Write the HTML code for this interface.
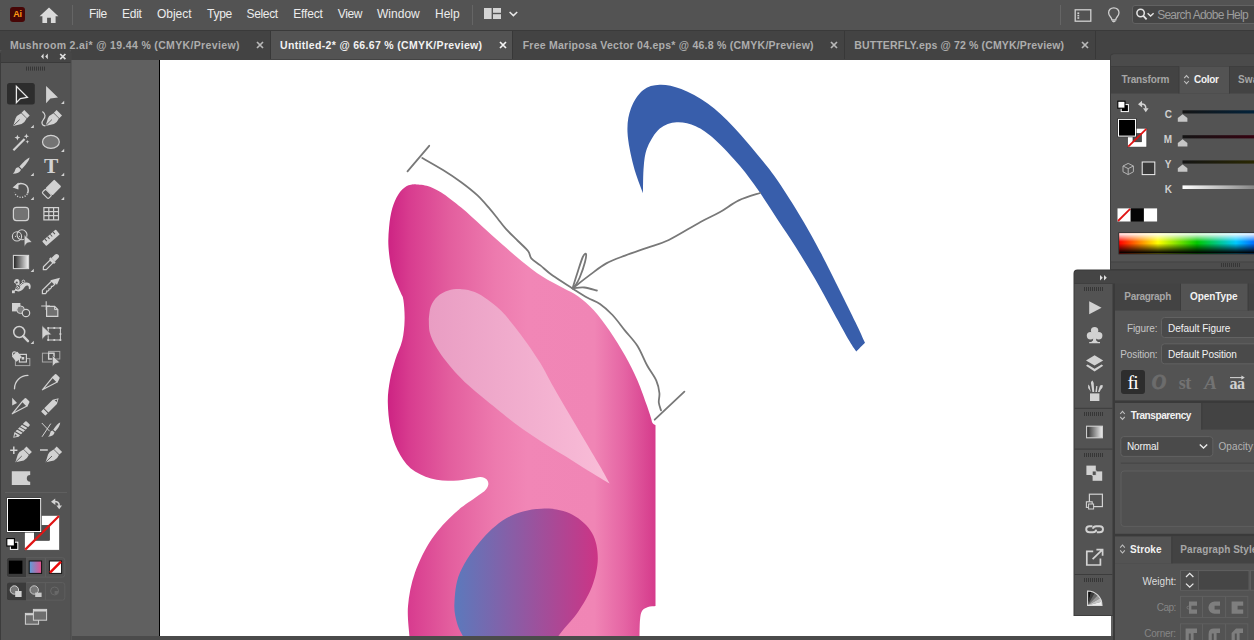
<!DOCTYPE html>
<html><head><meta charset="utf-8"><title>Adobe Illustrator</title>
<style>
*{box-sizing:border-box;margin:0;padding:0}
html,body{width:1254px;height:640px;overflow:hidden;background:#606060;font-family:"Liberation Sans",sans-serif;font-size:12px;color:#e0e0e0}
.abs{position:absolute}
#menubar{left:0;top:0;width:1254px;height:30px;background:#535353}
#menubar .mi{position:absolute;top:6px;font-size:12px;color:#ececec;white-space:nowrap;line-height:16px}
#tabbar{left:0;top:30px;width:1254px;height:29.5px;background:#434343;border-top:1px solid #3a3a3a}
.tab{position:absolute;top:0;height:28px;font-size:10.5px;font-weight:bold;line-height:28px;color:#adadad;white-space:nowrap;border-right:1px solid #383838}
.tab.on{background:#535353;color:#f2f2f2}
#paste{left:0;top:59px;width:1254px;height:581px;background:#606060}
#art{left:159px;top:59px;width:952px;height:577px;background:#fff;overflow:hidden;border-left:1px solid #000}
#botbar{left:72px;top:635.6px;width:1042px;height:5px;background:#4b4b4b}
#tools{left:0;top:50px;width:72px;height:590px}
#right{left:1070px;top:50px;width:184px;height:590px}
</style></head><body>
<div id="paste" class="abs"></div>
<div id="art" class="abs">
<svg width="951" height="577" viewBox="160 59 951 577" style="position:absolute;left:0;top:0">
<defs>
<linearGradient id="gp" gradientUnits="userSpaceOnUse" x1="388" y1="0" x2="656" y2="0">
<stop offset="0" stop-color="#cd2383"/><stop offset="0.08" stop-color="#d83c8f"/><stop offset="0.23" stop-color="#e35e9e"/><stop offset="0.4" stop-color="#ed7aae"/><stop offset="0.52" stop-color="#f186b6"/><stop offset="0.77" stop-color="#f085b5"/><stop offset="0.88" stop-color="#e565a4"/><stop offset="1" stop-color="#d53a8b"/>
</linearGradient>
<linearGradient id="gt" gradientUnits="userSpaceOnUse" x1="429" y1="0" x2="610" y2="0">
<stop offset="0" stop-color="#e99dc3"/><stop offset="1" stop-color="#f9bdd8"/>
</linearGradient>
<linearGradient id="ge" gradientUnits="userSpaceOnUse" x1="455" y1="0" x2="598" y2="0">
<stop offset="0" stop-color="#5c79bc"/><stop offset="1" stop-color="#cc3485"/>
</linearGradient>
</defs>
<path fill="url(#gp)" d="M414.5,184.2 C416.5,184.5 422.3,184.5 426.7,185.8 C431.1,187.2 435.1,188.7 440.9,192.3 C446.6,195.9 454.4,202.0 461.2,207.6 C468.0,213.2 474.7,219.7 481.5,225.8 C488.3,231.9 495.0,238.2 501.8,244.1 C508.6,250.0 515.3,256.0 522.1,261.4 C528.9,266.8 535.6,272.2 542.4,276.6 C549.2,281.0 556.8,284.5 562.7,287.8 C568.6,291.1 572.8,292.6 578.0,296.3 C583.2,300.1 588.6,304.6 593.8,310.3 C599.0,316.0 604.2,323.1 609.4,330.6 C614.6,338.2 620.3,347.3 625.0,355.6 C629.7,363.9 633.9,372.3 637.5,380.6 C641.1,388.9 644.6,399.4 646.9,405.6 C649.1,411.8 650.1,415.1 651.0,418.0 C651.9,420.9 651.8,421.8 652.5,423.0 C653.2,424.2 655.0,424.8 655.5,425.2 C655.5,455.3 655.5,575.9 655.5,606.0 C654.2,606.2 650.2,606.2 648.0,607.0 C645.8,607.8 643.3,608.8 642.0,611.0 C640.7,613.2 640.4,615.8 640.0,620.0 C639.6,624.2 639.6,633.3 639.5,636.0 C601.1,636.0 447.8,636.0 409.4,636.0 C409.2,631.0 407.1,616.8 408.0,606.2 C408.9,595.6 411.0,583.8 415.0,572.5 C419.0,561.2 425.3,548.6 431.9,538.7 C438.5,528.9 446.9,520.4 454.4,513.4 C461.9,506.4 471.8,500.4 476.9,496.6 C482.0,492.8 483.1,492.5 485.0,490.5 C486.9,488.5 488.1,486.4 488.3,484.5 C488.6,482.6 487.8,480.6 486.5,479.3 C485.2,478.1 483.2,477.1 480.5,477.0 C477.8,476.9 474.6,478.2 470.0,478.8 C465.4,479.4 459.5,480.9 453.0,480.8 C446.5,480.7 438.1,480.5 431.0,478.4 C423.9,476.3 416.1,472.9 410.5,468.2 C404.9,463.5 400.9,456.7 397.5,450.0 C394.1,443.3 392.0,436.0 390.4,428.0 C388.8,420.0 387.9,410.0 387.8,402.0 C387.7,394.0 388.8,387.0 390.0,380.0 C391.2,373.0 393.2,366.6 395.2,360.0 C397.2,353.4 400.6,347.3 402.2,340.6 C403.8,333.9 404.4,326.8 404.6,320.0 C404.8,313.2 404.1,304.7 403.4,300.0 C402.7,295.3 402.2,296.6 400.3,291.8 C398.4,287.1 394.2,278.9 392.2,271.5 C390.2,264.1 389.0,254.6 388.5,247.2 C388.0,239.8 388.5,233.3 389.1,226.9 C389.7,220.5 390.7,214.0 392.2,208.6 C393.7,203.2 395.9,198.1 398.3,194.4 C400.7,190.7 403.7,187.9 406.4,186.2 C409.1,184.5 413.1,184.5 414.5,184.2 Z"/>
<path fill="url(#gt)" d="M428.8,319.4 C429.1,317.2 429.4,310.1 430.9,306.3 C432.3,302.5 434.6,299.0 437.5,296.4 C440.4,293.8 444.4,291.7 448.4,290.5 C452.4,289.3 457.2,288.9 461.6,289.2 C466.0,289.4 470.3,290.2 474.7,292.0 C479.1,293.8 483.4,296.6 487.8,299.7 C492.2,302.8 496.5,306.2 500.9,310.6 C505.3,315.0 509.7,320.4 514.1,325.9 C518.5,331.4 522.8,337.2 527.2,343.4 C531.6,349.6 536.6,357.0 540.3,363.1 C544.0,369.2 546.8,374.9 549.6,380.0 C552.4,385.1 554.6,389.0 557.3,393.7 C560.0,398.4 563.0,403.5 565.9,408.4 C568.8,413.3 571.6,418.1 574.5,423.0 C577.4,427.9 580.1,432.7 583.0,437.6 C585.9,442.5 588.8,447.3 591.7,452.2 C594.6,457.1 597.3,461.6 600.3,466.8 C603.3,472.0 608.1,480.8 609.7,483.6 C608.1,482.7 604.8,480.7 600.3,478.0 C595.8,475.3 588.7,471.2 583.0,467.6 C577.3,464.0 571.6,460.1 565.9,456.5 C560.2,452.9 554.4,449.8 548.7,446.2 C543.0,442.6 537.2,438.9 531.5,435.0 C525.8,431.1 520.1,427.3 514.4,423.0 C508.7,418.7 502.5,413.5 497.2,409.2 C491.9,404.9 487.4,401.2 482.5,397.2 C477.6,393.2 472.7,389.2 468.1,385.0 C463.5,380.8 459.0,376.3 455.0,371.9 C451.0,367.5 447.4,363.2 444.1,358.8 C440.8,354.4 437.7,350.0 435.3,345.6 C432.9,341.2 430.9,336.9 429.8,332.5 C428.7,328.1 429.0,321.6 428.8,319.4 Z"/>
<path fill="url(#ge)" d="M462.8,636.0 C461.8,633.8 458.4,628.4 457.0,623.0 C455.6,617.6 453.9,611.8 454.4,603.4 C454.9,595.0 455.3,583.3 460.0,572.5 C464.7,561.7 474.1,548.1 482.5,538.7 C490.9,529.3 500.3,521.0 510.6,516.0 C520.9,511.0 534.1,508.8 544.4,508.6 C554.7,508.4 564.6,510.7 572.5,514.8 C580.4,518.9 587.8,525.7 592.0,533.0 C596.2,540.3 597.8,549.5 597.8,558.4 C597.8,567.3 595.3,577.6 592.0,586.5 C588.7,595.4 582.7,604.9 578.0,611.9 C573.3,618.9 567.3,624.7 564.0,628.7 C560.7,632.7 559.3,634.8 558.4,636.0 Z"/>
<path fill="#385eab" d="M643.0,193.3 C641.4,188.7 636.1,175.9 633.5,165.7 C630.9,155.5 627.9,141.8 627.5,132.2 C627.1,122.6 628.4,115.3 631.0,108.3 C633.6,101.3 638.2,94.2 643.0,90.3 C647.8,86.4 653.4,85.0 659.8,84.8 C666.2,84.6 673.3,86.0 681.3,89.1 C689.3,92.2 698.9,97.1 707.7,103.5 C716.5,109.9 725.0,118.0 734.0,127.4 C743.0,136.8 754.1,150.4 761.9,160.0 C769.7,169.6 773.6,174.6 780.6,185.0 C787.6,195.4 797.2,211.0 804.0,222.5 C810.8,234.0 815.3,242.4 821.3,253.8 C827.3,265.2 834.3,279.6 840.0,291.0 C845.7,302.4 851.4,313.9 855.6,322.5 C859.8,331.1 863.4,339.4 865.0,342.8 C863.5,344.2 857.8,350.1 856.3,351.5 C855.1,349.8 853.1,347.4 849.4,341.0 C845.6,334.6 839.5,323.4 833.8,313.0 C828.1,302.6 821.3,289.7 815.0,278.8 C808.7,267.9 802.2,257.4 796.0,247.5 C789.8,237.6 783.7,228.8 777.5,219.4 C771.3,210.0 765.0,199.9 758.8,191.0 C752.5,182.1 747.3,174.6 740.0,166.0 C732.7,157.4 722.2,146.0 714.8,139.4 C707.4,132.8 702.1,129.1 695.7,126.2 C689.3,123.3 682.6,121.8 676.6,122.2 C670.6,122.6 664.6,124.5 659.8,128.6 C655.0,132.7 650.5,140.4 647.8,146.6 C645.1,152.8 644.6,157.9 643.8,165.7 C643.0,173.5 643.1,188.7 643.0,193.3 Z"/>
<g fill="none" stroke="#787878" stroke-width="1.8" stroke-linecap="round" stroke-linejoin="round">
<path d="M407.5,171.3 L429.2,145.8"/>
<path d="M654.7,419.7 L684.4,391.6"/>
<path d="M422.3,158.0 C425.8,160.0 436.5,166.0 443.0,170.0 C449.5,174.0 455.4,178.0 461.2,182.2 C466.9,186.4 472.8,191.0 477.5,195.4 C482.2,199.8 486.2,204.7 489.6,208.6 C493.0,212.5 495.1,215.3 497.8,218.7 C500.5,222.1 502.5,225.2 505.9,228.9 C509.3,232.6 514.3,237.3 518.0,241.0 C521.7,244.7 526.0,248.3 528.2,251.2 C530.4,254.1 529.3,255.9 531.3,258.3 C533.3,260.7 536.8,262.5 540.4,265.4 C544.0,268.3 547.2,271.8 552.6,275.6 C558.0,279.4 566.7,284.7 572.5,288.4 C578.3,292.1 582.9,295.2 587.5,297.8 C592.1,300.4 595.8,301.1 600.0,304.0 C604.2,306.9 608.3,310.6 612.5,315.0 C616.7,319.4 620.8,325.4 625.0,330.6 C629.2,335.8 633.9,340.3 637.5,346.0 C641.1,351.7 643.8,359.2 646.9,365.0 C650.0,370.8 654.2,375.9 656.3,380.6 C658.4,385.3 659.0,389.4 659.4,393.0 C659.8,396.6 658.5,399.6 658.8,402.5 C659.1,405.4 660.6,409.0 661.0,410.3"/>
<path d="M760.0,193.0 C756.5,194.2 745.5,197.2 738.8,200.4 C732.1,203.6 726.0,208.7 719.6,212.3 C713.2,215.9 709.0,217.4 700.5,222.0 C692.0,226.6 677.7,235.7 668.8,240.0 C659.9,244.3 654.2,245.2 646.9,247.8 C639.6,250.4 631.8,253.0 625.0,255.6 C618.2,258.2 612.0,260.3 606.3,263.4 C600.6,266.5 596.2,270.2 590.6,274.4 C585.0,278.6 575.5,286.1 572.5,288.4"/>
<path d="M572.5,288.4 C573.4,285.5 576.3,276.2 578.0,271.0 C579.7,265.8 581.5,259.8 582.8,257.0 C584.1,254.2 585.6,253.2 586.0,254.0 C586.4,254.8 586.0,258.1 585.0,262.0 C584.0,265.9 581.5,273.3 579.7,277.5 C578.0,281.7 575.4,285.4 574.5,287.0"/>
<path d="M572.5,288.4 C574.5,288.2 580.3,287.1 584.4,287.5 C588.5,287.9 594.8,290.0 596.9,290.5"/>
</g>
</svg>
</div>
<div id="botbar" class="abs"></div>
<div id="menubar" class="abs">
<div class="abs" style="left:10px;top:7px;width:15px;height:15px;background:#470606;border-radius:3px;color:#ff9b12;font-weight:bold;font-size:9px;line-height:15px;text-align:center;letter-spacing:-0.3px">Ai</div>
<svg class="abs" style="left:39px;top:7px" width="20" height="17" viewBox="0 0 20 17"><path fill="#dadada" d="M10,0.6 L19.4,9.3 L16.6,9.3 L16.6,16 L11.9,16 L11.9,10.8 L8.1,10.8 L8.1,16 L3.4,16 L3.4,9.3 L0.6,9.3 Z"/></svg>
<div class="abs" style="left:72px;top:5px;width:1px;height:20px;background:#656565"></div>
<div class="mi" style="left:89.1px;letter-spacing:-0.41px">File</div>
<div class="mi" style="left:122.0px;letter-spacing:-0.24px">Edit</div>
<div class="mi" style="left:156.9px;letter-spacing:-0.01px">Object</div>
<div class="mi" style="left:207.1px;letter-spacing:-0.28px">Type</div>
<div class="mi" style="left:246.5px;letter-spacing:-0.33px">Select</div>
<div class="mi" style="left:293.2px;letter-spacing:-0.16px">Effect</div>
<div class="mi" style="left:337.8px;letter-spacing:-0.40px">View</div>
<div class="mi" style="left:376.9px;letter-spacing:0.04px">Window</div>
<div class="mi" style="left:435.1px;letter-spacing:-0.07px">Help</div>
<div class="abs" style="left:472px;top:5px;width:1px;height:20px;background:#656565"></div>
<svg class="abs" style="left:483px;top:7px" width="36" height="14" viewBox="0 0 36 14"><g fill="#d4d4d4"><rect x="1" y="1" width="7.6" height="11"/><rect x="10" y="1" width="8" height="4.8"/><rect x="10" y="7.2" width="8" height="4.8"/></g><path d="M26.6,5 L30.4,8.6 L34.2,5" fill="none" stroke="#e8e8e8" stroke-width="1.5"/></svg>
<div class="abs" style="left:1060px;top:5px;width:1px;height:20px;background:#656565"></div>
<svg class="abs" style="left:1074px;top:8px" width="18" height="15" viewBox="0 0 18 15"><rect x="1.2" y="1.8" width="15.6" height="11.4" fill="none" stroke="#d0d0d0" stroke-width="1.3"/><g fill="#d0d0d0"><rect x="3.4" y="4.4" width="1.8" height="1.6"/><rect x="3.4" y="6.8" width="1.8" height="1.6"/><rect x="3.4" y="9.2" width="1.8" height="1.6"/></g></svg>
<svg class="abs" style="left:1106px;top:6px" width="16" height="18" viewBox="0 0 16 18"><path d="M7.8,1.8 C4.6,1.8 2.6,4 2.6,6.8 C2.6,9 4,10.4 5,11.6 C5.6,12.4 5.8,13 5.8,13.8 L9.8,13.8 C9.8,13 10,12.4 10.6,11.6 C11.6,10.4 13,9 13,6.8 C13,4 11,1.8 7.8,1.8 Z" fill="none" stroke="#d0d0d0" stroke-width="1.3"/><path d="M6,14.6 H9.6 V15.6 Q7.8,17.2 6,15.6 Z" fill="#d0d0d0"/></svg>
<div class="abs" style="left:1132px;top:5px;width:130px;height:19px;background:#454545;border:1px solid #626262;border-radius:3px"></div>
<svg class="abs" style="left:1135px;top:7px" width="22" height="15" viewBox="0 0 22 15"><circle cx="5.6" cy="6" r="3.7" fill="none" stroke="#e4e4e4" stroke-width="1.5"/><path d="M8.3,8.8 L11.6,12.4" stroke="#e4e4e4" stroke-width="1.8"/><path d="M12.6,6.2 L15.6,9 L18.6,6.2" fill="none" stroke="#e4e4e4" stroke-width="1.4"/></svg>
<div class="mi" style="left:1157.2px;top:7px;color:#9c9c9c;letter-spacing:-0.75px">Search Adobe Help</div>
</div>
<div id="tabbar" class="abs">
<div class="tab" style="left:0.0px;width:271.0px"><span class="abs" style="left:9.9px;top:0;letter-spacing:0.35px">Mushroom 2.ai* @ 19.44 % (CMYK/Preview)</span><svg class="abs" style="left:256.0px;top:10px" width="8" height="8" viewBox="0 0 8 8"><path d="M1,1 L7,7 M7,1 L1,7" stroke="#b8b8b8" stroke-width="1.7"/></svg></div>
<div class="tab on" style="left:271.0px;width:242.0px"><span class="abs" style="left:9.0px;top:0;letter-spacing:0.33px">Untitled-2* @ 66.67 % (CMYK/Preview)</span><svg class="abs" style="left:228.2px;top:10px" width="8" height="8" viewBox="0 0 8 8"><path d="M1,1 L7,7 M7,1 L1,7" stroke="#f4f4f4" stroke-width="1.7"/></svg></div>
<div class="tab" style="left:513.0px;width:331.5px"><span class="abs" style="left:9.7px;top:0;letter-spacing:0.25px">Free Mariposa Vector 04.eps* @ 46.8 % (CMYK/Preview)</span><svg class="abs" style="left:316.5px;top:10px" width="8" height="8" viewBox="0 0 8 8"><path d="M1,1 L7,7 M7,1 L1,7" stroke="#b8b8b8" stroke-width="1.7"/></svg></div>
<div class="tab" style="left:844.5px;width:251.5px"><span class="abs" style="left:9.7px;top:0;letter-spacing:0.15px">BUTTERFLY.eps @ 72 % (CMYK/Preview)</span><svg class="abs" style="left:236.0px;top:10px" width="8" height="8" viewBox="0 0 8 8"><path d="M1,1 L7,7 M7,1 L1,7" stroke="#b8b8b8" stroke-width="1.7"/></svg></div>
</div>
<div id="tools" class="abs">
<svg width="72" height="590" viewBox="0 50 72 590" style="position:absolute;left:0;top:0">
<rect x="0" y="50" width="71" height="590" fill="#535353"/>
<path d="M0,62.5 V53 Q0,50 3,50 H68 Q71,50 71,53 V62.5 Z" fill="#454545"/>
<rect x="0" y="62" width="71" height="1" fill="#3a3a3a"/>
<rect x="0" y="53" width="1" height="587" fill="#3c3c3c"/><rect x="70.5" y="53" width="1" height="587" fill="#484848"/>
<path d="M43.6,53.6 L41,56.4 L43.6,59.2 Z M47.8,53.6 L45.2,56.4 L47.8,59.2 Z" fill="#dcdcdc"/>
<path d="M60.2,54 L65.4,59.2 M65.4,54 L60.2,59.2" stroke="#dcdcdc" stroke-width="1.7"/>
<rect x="26.0" y="66.6" width="1" height="4" fill="#363636"/><rect x="28.0" y="66.6" width="1" height="4" fill="#363636"/><rect x="30.0" y="66.6" width="1" height="4" fill="#363636"/><rect x="32.0" y="66.6" width="1" height="4" fill="#363636"/><rect x="34.0" y="66.6" width="1" height="4" fill="#363636"/><rect x="36.0" y="66.6" width="1" height="4" fill="#363636"/><rect x="38.0" y="66.6" width="1" height="4" fill="#363636"/><rect x="40.0" y="66.6" width="1" height="4" fill="#363636"/><rect x="42.0" y="66.6" width="1" height="4" fill="#363636"/><rect x="44.0" y="66.6" width="1" height="4" fill="#363636"/>
<rect x="7" y="83" width="27.8" height="21.6" rx="2.5" fill="#2d2d2d"/>
<path d="M16.4,86.4 L16.4,102.6 L20.3,98.5 L27.4,97.4 Z" fill="none" stroke="#ebebeb" stroke-width="1.3" stroke-linejoin="miter"/>
<path d="M46.1,86 L46.1,103.2 L50.4,98.6 L58,97.4 Z" fill="#d2d2d2"/>
<path d="M61.0,103.9 L64.2,100.7 L64.2,103.9 Z" fill="#d2d2d2"/><g transform="translate(0.0,0.0)"><path d="M13.2,125.9 L15.6,118.2 Q16.8,115.3 21.2,113.2 L26.6,118.6 Q24.8,122.8 21.6,124 Z" fill="#d2d2d2"/><path d="M13.6,125.5 L19.6,119.6" stroke="#535353" stroke-width="0.9" fill="none"/><path d="M21.6,112.8 L24.3,110.1 L29.7,115.5 L27,118.2 Z" fill="#d2d2d2"/></g><path d="M30.6,127.9 L33.8,124.7 L33.8,127.9 Z" fill="#d2d2d2"/><g transform="translate(32.3,0.0)"><path d="M13.2,125.9 L15.6,118.2 Q16.8,115.3 21.2,113.2 L26.6,118.6 Q24.8,122.8 21.6,124 Z" fill="#d2d2d2"/><path d="M13.6,125.5 L19.6,119.6" stroke="#535353" stroke-width="0.9" fill="none"/><path d="M21.6,112.8 L24.3,110.1 L29.7,115.5 L27,118.2 Z" fill="#d2d2d2"/></g><path d="M42.4,111.4 C45.8,114 45.6,117 43.4,119.6 C41.2,122.2 41.4,125.6 45.4,125.8" fill="none" stroke="#d2d2d2" stroke-width="1.2"/>
<path d="M13.4,150.2 L24.6,139" stroke="#d2d2d2" stroke-width="2.2"/><path d="M17.4,134.7 L18.2,136.8 L20.3,137.6 L18.2,138.4 L17.4,140.5 L16.6,138.4 L14.5,137.6 L16.6,136.8 Z" fill="#d2d2d2"/><path d="M26.4,133.6 L27.1,135.5 L29.0,136.2 L27.1,136.9 L26.4,138.8 L25.7,136.9 L23.8,136.2 L25.7,135.5 Z" fill="#d2d2d2"/><path d="M27.4,139.9 L27.9,141.3 L29.3,141.8 L27.9,142.3 L27.4,143.7 L26.9,142.3 L25.5,141.8 L26.9,141.3 Z" fill="#d2d2d2"/>
<ellipse cx="50.9" cy="141.9" rx="8.4" ry="6.5" fill="#747474" stroke="#d2d2d2" stroke-width="1.2"/><path d="M61.0,151.9 L64.2,148.7 L64.2,151.9 Z" fill="#d2d2d2"/>
<path d="M29.6,157.4 Q26.5,158.4 19.4,166.4 L21.9,168.9 Q29.2,161 29.6,157.4 Z" fill="#d2d2d2"/><path d="M18.5,167.3 L21,169.8 Q19.4,173.7 12.8,173.7 Q14.8,172.2 15.1,170 Q15.7,167 18.5,167.3Z" fill="#d2d2d2"/><path d="M30.6,175.9 L33.8,172.7 L33.8,175.9 Z" fill="#d2d2d2"/><text x="51.2" y="173.3" font-family="'Liberation Serif',serif" font-weight="bold" font-size="21.5" text-anchor="middle" fill="#d2d2d2">T</text><path d="M61.0,175.9 L64.2,172.7 L64.2,175.9 Z" fill="#d2d2d2"/>
<path d="M15.6,186.6 A6.9,6.9 0 0 1 28.2,190.4 A6.9,6.9 0 0 1 27.4,193.4" fill="none" stroke="#d2d2d2" stroke-width="1.5"/><path d="M12.6,187.6 L18.6,182.6 L18.4,189.4 Z" fill="#d2d2d2"/><path d="M27.2,193.8 A6.9,6.9 0 0 1 14.6,192.6" fill="none" stroke="#d2d2d2" stroke-width="1.4" stroke-dasharray="1.1,1.5"/><path d="M30.6,199.9 L33.8,196.7 L33.8,199.9 Z" fill="#d2d2d2"/><g transform="translate(51.4,189.4) rotate(-45)"><rect x="-3.4" y="-5" width="12.4" height="10" rx="1" fill="#d2d2d2"/><rect x="-9" y="-4.4" width="5.2" height="8.8" rx="1.4" fill="none" stroke="#d2d2d2" stroke-width="1.2"/></g><path d="M61.0,199.9 L64.2,196.7 L64.2,199.9 Z" fill="#d2d2d2"/>
<rect x="13.4" y="207.4" width="15.2" height="13.2" rx="3" fill="#737373" stroke="#d2d2d2" stroke-width="1.2"/><path d="M43.9,207.6 H58.5 V219.8 H43.9 Z M48.8,207.6 V219.8 M53.6,207.6 V219.8 M43.9,211.7 H58.5 M43.9,215.7 H58.5" fill="none" stroke="#d2d2d2" stroke-width="1.2"/>
<circle cx="17" cy="236.4" r="4.6" fill="none" stroke="#d2d2d2" stroke-width="1.1"/><circle cx="22" cy="234.8" r="5" fill="none" stroke="#d2d2d2" stroke-width="1.1"/><path d="M15,236.4 h1 m1,0 h1 m1,0 h1 m1,0 h1" stroke="#d2d2d2" stroke-width="1"/><path d="M24.2,234.8 L24.2,246.4 L27.2,243 L32,242 Z" fill="#d2d2d2" stroke="#535353" stroke-width="0.6"/><g transform="translate(51,237.8) rotate(-41)"><rect x="-9" y="-3.2" width="18" height="6.4" rx="0.8" fill="#d2d2d2"/><path d="M-5.4,-3.2 v3 M-1.8,-3.2 v3 M1.8,-3.2 v3 M5.4,-3.2 v3" stroke="#535353" stroke-width="1"/></g>
<defs><linearGradient id="tg" x1="0" x2="1" y1="0" y2="0"><stop offset="0" stop-color="#222"/><stop offset="1" stop-color="#f4f4f4"/></linearGradient></defs><rect x="13.4" y="255.4" width="15.2" height="13.2" fill="url(#tg)" stroke="#d2d2d2" stroke-width="1.1"/><path d="M30.6,271.9 L33.8,268.7 L33.8,271.9 Z" fill="#d2d2d2"/><g transform="translate(50.8,262.2) rotate(-45)"><path d="M-10.6,0 L-8.4,-2 H1 V2 H-8.4 Z" fill="none" stroke="#d2d2d2" stroke-width="1.2" stroke-linejoin="round"/><rect x="1" y="-3.6" width="2.4" height="7.2" fill="#d2d2d2"/><path d="M3.4,-2.4 H8 Q10.6,-2.4 10.6,0 Q10.6,2.4 8,2.4 H3.4 Z" fill="#d2d2d2"/></g>
<path d="M14.1,283 C13.8,280.6 15.4,279 17,279 C19,279 19.8,281 19.6,283.2 C19.5,284.6 19.2,285.8 19.4,286.6 C21,284.8 23.2,283.2 25.4,282.6 C27.6,282 29.6,282.8 30.4,284.8 C31,286.4 30.6,288 30,289.2 L28.8,288.8 C29,287 28.6,285.8 27.4,285.6 C26,285.4 25,286.6 24,288 C22.8,289.8 21,291.2 18.8,291.4 C17,291.5 15.6,291 14.8,290.2 C15.6,288.6 16.4,286.6 16.2,284.8 C16.1,283.6 15.2,283 14.1,283 Z" fill="#d2d2d2"/><circle cx="16.7" cy="282.5" r="1.1" fill="#535353"/><path d="M14,291.4 L23.2,281.8" stroke="#d2d2d2" stroke-width="1"/><circle cx="17.8" cy="287.2" r="1.9" fill="#d2d2d2" stroke="#535353" stroke-width="0.9"/><path d="M16.6,288.4 L19,286" stroke="#535353" stroke-width="0.8"/><circle cx="23.4" cy="281.4" r="1.3" fill="#535353" stroke="#d2d2d2" stroke-width="0.9"/><rect x="12" y="290.4" width="2.8" height="2.8" fill="#d2d2d2"/><path d="M51.8,281 L42.4,290.2 L42.4,293.6 L45.4,293.6 L46.6,292.4 L46.6,291.2 L47.8,291.2 L49,290 L49,288.8 L50.2,288.8 L51.4,287.6 L51.4,286.4 L52.6,286.4 L55.2,283.8" fill="none" stroke="#d2d2d2" stroke-width="1.2"/><path d="M50.4,280.2 L60,277.8 L57,284.8 L55.6,283.4 L54.2,284.6 L51.2,281.6 Z" fill="#d2d2d2"/>
<rect x="12" y="303" width="8.4" height="8.4" fill="#d2d2d2"/><circle cx="20.6" cy="309.8" r="3.8" fill="#7c7c7c" stroke="#d2d2d2" stroke-width="1"/><circle cx="26" cy="313" r="3.7" fill="#535353" stroke="#d2d2d2" stroke-width="1.2"/><path d="M46.2,301.2 V310 M41.2,306 H50" stroke="#d2d2d2" stroke-width="1.1" fill="none"/><path d="M46.6,306.4 H54.6 L57.8,309.6 V316.4 H46.6 Z" fill="#707070" stroke="#d2d2d2" stroke-width="1.2"/><path d="M54.6,306.4 V309.6 H57.8" fill="none" stroke="#d2d2d2" stroke-width="1"/>
<circle cx="19.2" cy="332" r="5.5" fill="none" stroke="#d2d2d2" stroke-width="1.5"/><path d="M23.2,336.2 L28,341.2" stroke="#d2d2d2" stroke-width="2.4" stroke-linecap="round"/><path d="M30.6,343.9 L33.8,340.7 L33.8,343.9 Z" fill="#d2d2d2"/><rect x="48.2" y="328" width="12.2" height="12" fill="none" stroke="#d2d2d2" stroke-width="1"/><rect x="47.3" y="327.1" width="1.8" height="1.8" fill="#d2d2d2"/><rect x="53.4" y="327.1" width="1.8" height="1.8" fill="#d2d2d2"/><rect x="59.5" y="327.1" width="1.8" height="1.8" fill="#d2d2d2"/><rect x="59.5" y="333.1" width="1.8" height="1.8" fill="#d2d2d2"/><rect x="59.5" y="339.1" width="1.8" height="1.8" fill="#d2d2d2"/><rect x="53.4" y="339.1" width="1.8" height="1.8" fill="#d2d2d2"/><rect x="47.3" y="339.1" width="1.8" height="1.8" fill="#d2d2d2"/><path d="M42,325.6 L42,339.4 L45.8,335.4 L51.6,334.6 Z" fill="#d2d2d2" stroke="#535353" stroke-width="0.6"/>
<rect x="15.4" y="358.6" width="14.4" height="7" fill="none" stroke="#a8a8a8" stroke-width="1"/><rect x="19.4" y="354.4" width="7" height="7.6" fill="#535353" stroke="#d2d2d2" stroke-width="1.2"/><rect x="21.6" y="357" width="2.6" height="2.6" fill="#d2d2d2"/><g transform="translate(16.6,356.4) rotate(-40)"><rect x="-3.6" y="-3.4" width="7.2" height="7.4" rx="0.8" fill="#d2d2d2"/><path d="M-2.4,-3.4 Q0,-7.4 2.4,-3.4" fill="none" stroke="#d2d2d2" stroke-width="1.1"/></g><rect x="42.4" y="353.2" width="11.6" height="8.8" fill="none" stroke="#a8a8a8" stroke-width="1"/><rect x="48.6" y="351.4" width="11.2" height="7.6" fill="none" stroke="#a8a8a8" stroke-width="1"/><rect x="48.6" y="353.2" width="5.4" height="5.8" fill="none" stroke="#d2d2d2" stroke-width="1.3"/><path d="M52.4,355.4 L52.4,366.6 L55.4,363.4 L60,362.6 Z" fill="#d2d2d2" stroke="#535353" stroke-width="0.6"/>
<path d="M14.5,388.8 A13.4,13.4 0 0 1 27.9,375.4" fill="none" stroke="#d2d2d2" stroke-width="1.3" stroke-linecap="round"/><g transform="translate(0.0,0.0)"><path d="M42.4,389.8 L52.6,377.4 L57.2,382 Z" fill="none" stroke="#d2d2d2" stroke-width="1.2" stroke-linejoin="round"/><path d="M52.2,377 L55,374.2 Q55.8,373.6 56.6,374.4 L59.4,377.2 Q60,378 59.4,378.8 L57.6,382.4 Z" fill="#d2d2d2"/></g>
<g transform="translate(-30.2,24.0)"><path d="M42.4,389.8 L52.6,377.4 L57.2,382 Z" fill="none" stroke="#d2d2d2" stroke-width="1.2" stroke-linejoin="round"/><path d="M52.2,377 L55,374.2 Q55.8,373.6 56.6,374.4 L59.4,377.2 Q60,378 59.4,378.8 L57.6,382.4 Z" fill="#d2d2d2"/></g><path d="M12.2,397.8 L12.2,405.6 L17,403 Z" fill="#d2d2d2"/><g transform="translate(51,405.8) rotate(-45)"><path d="M-10.4,-3 H-7.6 V3 H-10.4 Q-11,3 -11,2.4 V-2.4 Q-11,-3 -10.4,-3 Z M-6.6,-3 H5.4 L10.8,0 L5.4,3 H-6.6 Z" fill="#d2d2d2"/><path d="M6.6,-1.4 L9,0 L6.6,1.4 Z" fill="#535353"/></g>
<g transform="translate(21,430) rotate(-45)"><path d="M-11,0 L-6.4,-3 H9 Q10,-3 10,-2 V2 Q10,3 9,3 H-6.4 Z" fill="#d2d2d2"/><path d="M-5.4,-3.4 L-3.6,3.4 M-2,-3.4 L-0.2,3.4 M1.4,-3.4 L3.2,3.4 M4.8,-3.4 L6.6,3.4" stroke="#535353" stroke-width="1.1"/><path d="M-9.4,0 L-7,-1.4 V1.4 Z" fill="#535353"/></g><path d="M41.8,423 L49.6,431.2 M42,436.8 L50.8,423.6" stroke="#d2d2d2" stroke-width="1" fill="none"/><path d="M60.2,422.6 Q57.4,423.6 53.2,429.8 L55.2,431.6 Q60,426.4 60.2,422.6 Z" fill="#d2d2d2"/><path d="M52.4,430.6 L54.6,432.6 Q53.6,436.6 48,436.8 Q49.8,435.2 50,433.4 Q50.4,430.6 52.4,430.6 Z" fill="#d2d2d2"/>
<g transform="translate(2.2,336.4)"><path d="M13.2,125.9 L15.6,118.2 Q16.8,115.3 21.2,113.2 L26.6,118.6 Q24.8,122.8 21.6,124 Z" fill="#d2d2d2"/><path d="M13.6,125.5 L19.6,119.6" stroke="#535353" stroke-width="0.9" fill="none"/><path d="M21.6,112.8 L24.3,110.1 L29.7,115.5 L27,118.2 Z" fill="#d2d2d2"/></g><path d="M10.2,450.2 H17.4 M13.8,446.4 V454" stroke="#d2d2d2" stroke-width="1.5"/><g transform="translate(32.4,336.4)"><path d="M13.2,125.9 L15.6,118.2 Q16.8,115.3 21.2,113.2 L26.6,118.6 Q24.8,122.8 21.6,124 Z" fill="#d2d2d2"/><path d="M13.6,125.5 L19.6,119.6" stroke="#535353" stroke-width="0.9" fill="none"/><path d="M21.6,112.8 L24.3,110.1 L29.7,115.5 L27,118.2 Z" fill="#d2d2d2"/></g><path d="M40,450 H47.8" stroke="#d2d2d2" stroke-width="1.5"/>
<path d="M11.8,471.3 H30.2 V474.9 A3.4,3.4 0 0 0 30.2,481.7 V485 H11.8 Z" fill="#d2d2d2"/>
<rect x="5" y="492" width="62" height="1" fill="#5f5f5f"/>
<rect x="24.5" y="515.3" width="35.1" height="34.9" fill="#fff" stroke="#3a3a3a" stroke-width="0.6"/><rect x="34.3" y="525.4" width="15.2" height="14.9" fill="#4e4e4e" stroke="#2a2a2a" stroke-width="0.6"/><path d="M25.2,549.6 L59,516" stroke="#e01414" stroke-width="2.2"/>
<rect x="6.4" y="497.4" width="35.4" height="35.2" fill="#3a3a3a"/><rect x="7" y="498" width="34.2" height="34" fill="#fff"/><rect x="8" y="499" width="32.2" height="32" fill="#000"/>
<path d="M53.6,501.6 Q59.4,501 59.2,506.2" fill="none" stroke="#d2d2d2" stroke-width="1.6"/><path d="M51,501.8 L55.2,498.4 L55.4,505 Z M56.4,505.4 L62,505.4 L59.2,509.2 Z" fill="#d2d2d2"/>
<rect x="10.4" y="542.2" width="7.4" height="7.2" fill="#000" stroke="#fff" stroke-width="1"/><rect x="6.8" y="538.6" width="7.6" height="7.4" fill="#fff" stroke="#000" stroke-width="1.1"/>
<rect x="6.8" y="557.7" width="58" height="19.4" rx="2.5" fill="none" stroke="#5e5e5e" stroke-width="1"/><path d="M26.1,557.7 V577 M45.4,557.7 V577" stroke="#5e5e5e" stroke-width="1"/><path d="M9.3,557.7 H26.1 V577.1 H9.3 Q6.8,577.1 6.8,574.6 V560.2 Q6.8,557.7 9.3,557.7 Z" fill="#3b3b3b"/><rect x="8.8" y="560.6" width="13.6" height="13.2" fill="#000"/><defs><linearGradient id="tg2" x1="0" x2="1" y1="0" y2="0"><stop offset="0" stop-color="#58a0dc"/><stop offset="1" stop-color="#e8508c"/></linearGradient></defs><rect x="29.2" y="561" width="12.4" height="12.4" fill="url(#tg2)" stroke="#111" stroke-width="1"/><rect x="49.4" y="561" width="12.2" height="12.4" fill="#fff" stroke="#111" stroke-width="1"/><path d="M50,572.6 L61,561.6" stroke="#e80808" stroke-width="2.4"/>
<rect x="6.8" y="582.6" width="58" height="17.6" rx="2.5" fill="none" stroke="#5e5e5e" stroke-width="1"/><path d="M26.1,582.6 V600.2 M45.4,582.6 V600.2" stroke="#5e5e5e" stroke-width="1"/><path d="M9.3,582.6 H26.1 V600.2 H9.3 Q6.8,600.2 6.8,597.7 V585.1 Q6.8,582.6 9.3,582.6 Z" fill="#3b3b3b"/><circle cx="14.4" cy="590" r="4.2" fill="#777" stroke="#d2d2d2" stroke-width="1"/><rect x="15.2" y="591" width="6.4" height="6" fill="#d2d2d2"/><circle cx="34.2" cy="590" r="4.2" fill="#777" stroke="#c8c8c8" stroke-width="1"/><rect x="35.2" y="592.6" width="6.4" height="4.4" fill="#c8c8c8"/><circle cx="54.6" cy="591" r="4" fill="none" stroke="#686868" stroke-width="1"/><path d="M54.6,591 h3.8 a3.8,3.8 0 0 1 -3.8,3.8 Z" fill="#686868"/>
<rect x="25.4" y="613.4" width="13.2" height="10.8" fill="#6e6e6e" stroke="#d2d2d2" stroke-width="1"/><rect x="33.4" y="609.4" width="13.2" height="10.8" fill="#6e6e6e" stroke="#d2d2d2" stroke-width="1"/><path d="M25.4,614.6 H33 M33.4,610.8 H46.6" stroke="#d2d2d2" stroke-width="1.4"/>
</svg>
</div>
<div id="right" class="abs">
<svg width="184" height="590" viewBox="1070 50 184 590" style="position:absolute;left:0;top:0" font-family="'Liberation Sans',sans-serif">
<path d="M1110,270 V57 Q1110,53.5 1113.5,53.5 H1254 V270 Z" fill="#3c3c3c"/>
<path d="M1111,269 V57.5 Q1111,54.5 1114,54.5 H1254 V269 Z" fill="#535353"/>
<path d="M1111,66 V57.5 Q1111,54.5 1114,54.5 H1254 V66 Z" fill="#4b4b4b"/>
<rect x="1111" y="66" width="143" height="27.5" fill="#434343"/>
<rect x="1111" y="66" width="143" height="1" fill="#3e3e3e"/>
<rect x="1179" y="66.5" width="50" height="27" fill="#535353"/>
<rect x="1178.5" y="66.5" width="1" height="27" fill="#3c3c3c"/><rect x="1229" y="66.5" width="1" height="27" fill="#3c3c3c"/>
<text x="1121.5" y="83.4" font-size="10" font-weight="bold" letter-spacing="-0.14" fill="#a6a6a6">Transform</text><path d="M1184.2,78.2 l2.3,-2.6 l2.3,2.6 M1184.2,81.0 l2.3,2.6 l2.3,-2.6" fill="none" stroke="#c0c0c0" stroke-width="1.1"/><text x="1194.0" y="83.4" font-size="10" font-weight="bold" letter-spacing="-0.30" fill="#f2f2f2">Color</text><text x="1238.0" y="83.4" font-size="10" font-weight="bold" letter-spacing="0.11" fill="#a6a6a6">Swatches</text>
<rect x="1121.2" y="104.6" width="7.2" height="7" fill="#000" stroke="#fff" stroke-width="1"/><rect x="1117.8" y="101.2" width="7.2" height="7" fill="#fff" stroke="#000" stroke-width="1.1"/>
<path d="M1140.6,104 Q1146,103.4 1145.8,108.6" fill="none" stroke="#d2d2d2" stroke-width="1.5"/><path d="M1138,104.2 L1142,100.8 L1142.2,107.4 Z M1143,108.2 L1148.6,108.2 L1145.8,112.2 Z" fill="#d2d2d2"/>
<rect x="1127.6" y="128.2" width="19.2" height="18.9" fill="#fff" stroke="#333" stroke-width="0.6"/><rect x="1133" y="133.6" width="8.4" height="8.2" fill="#4e4e4e" stroke="#222" stroke-width="0.6"/><path d="M1128.2,146.6 L1146.4,128.8" stroke="#e01414" stroke-width="1.8"/>
<rect x="1117.4" y="118.3" width="19.2" height="18.9" fill="#2e2e2e"/><rect x="1118" y="118.9" width="18" height="17.7" fill="#fff"/><rect x="1119" y="119.9" width="16" height="15.7" fill="#000"/>
<defs><linearGradient id="sc" x1="0" x2="1"><stop offset="0" stop-color="#141414"/><stop offset="1" stop-color="#00243f"/></linearGradient><linearGradient id="sm" x1="0" x2="1"><stop offset="0" stop-color="#141414"/><stop offset="1" stop-color="#3a0010"/></linearGradient><linearGradient id="sy" x1="0" x2="1"><stop offset="0" stop-color="#141414"/><stop offset="1" stop-color="#2c2a00"/></linearGradient><linearGradient id="sk" x1="0" x2="1"><stop offset="0" stop-color="#ffffff"/><stop offset="1" stop-color="#777"/></linearGradient></defs>
<rect x="1182.5" y="110.3" width="80" height="3.2" fill="url(#sc)" /><path d="M1177.8,121.7 V118.1 L1182.6,114.3 L1187.4,118.1 V121.7 Z" fill="#c6c6c6"/><text x="1164.8" y="118.1" font-size="10" font-weight="bold" letter-spacing="0.00" fill="#cfcfcf">C</text>
<rect x="1182.5" y="135.2" width="80" height="3.2" fill="url(#sm)" /><path d="M1177.8,146.6 V143.0 L1182.6,139.2 L1187.4,143.0 V146.6 Z" fill="#c6c6c6"/><text x="1163.8" y="143.0" font-size="10" font-weight="bold" letter-spacing="0.00" fill="#cfcfcf">M</text>
<rect x="1182.5" y="160.4" width="80" height="3.2" fill="url(#sy)" /><path d="M1177.8,171.8 V168.2 L1182.6,164.4 L1187.4,168.2 V171.8 Z" fill="#c6c6c6"/><text x="1164.8" y="168.2" font-size="10" font-weight="bold" letter-spacing="0.00" fill="#cfcfcf">Y</text>
<rect x="1182.5" y="185.4" width="80" height="3.6" fill="url(#sk)"/><text x="1164.8" y="192.8" font-size="10" font-weight="bold" letter-spacing="0.00" fill="#cfcfcf">K</text>
<path d="M1128.2,163.4 L1133.4,166 V171.8 L1128.2,174.6 L1123,171.8 V166 Z M1123,166 L1128.2,168.6 L1133.4,166 M1128.2,168.6 V174.6" fill="none" stroke="#b4b4b4" stroke-width="1"/><rect x="1142.2" y="162" width="12.6" height="12.6" fill="#3a3a3a" stroke="#f0f0f0" stroke-width="1"/>
<rect x="1117.5" y="208.4" width="13.2" height="13.1" fill="#fff"/><path d="M1118,221 L1130.2,208.9" stroke="#e01414" stroke-width="1.8"/><rect x="1130.7" y="208.4" width="13.2" height="13.1" fill="#050505"/><rect x="1143.9" y="208.4" width="13.2" height="13.1" fill="#fff"/>
<defs><linearGradient id="hue" gradientUnits="userSpaceOnUse" x1="1119" x2="1353" y1="0" y2="0"><stop offset="0" stop-color="#ff0000"/><stop offset="0.1667" stop-color="#ffff00"/><stop offset="0.3333" stop-color="#00c800"/><stop offset="0.5" stop-color="#00c8ff"/><stop offset="0.6667" stop-color="#0000ff"/><stop offset="0.8333" stop-color="#ff00ff"/><stop offset="1" stop-color="#ff0000"/></linearGradient><linearGradient id="bw" x1="0" x2="0" y1="0" y2="1"><stop offset="0" stop-color="#fff" stop-opacity="1"/><stop offset="0.42" stop-color="#fff" stop-opacity="0"/><stop offset="0.5" stop-color="#000" stop-opacity="0"/><stop offset="0.97" stop-color="#000" stop-opacity="1"/></linearGradient></defs><rect x="1118.4" y="232.4" width="140" height="22" fill="#2a2a2a"/><rect x="1119.2" y="233.2" width="140" height="20.4" fill="url(#hue)"/><rect x="1119.2" y="233.2" width="140" height="20.4" fill="url(#bw)"/>
<rect x="1111" y="261.6" width="143" height="1" fill="#404040"/><rect x="1111" y="262.6" width="143" height="6.4" fill="#4d4d4d"/><rect x="1221.0" y="263.0" width="1" height="4" fill="#363636"/><rect x="1223.0" y="263.0" width="1" height="4" fill="#363636"/><rect x="1225.0" y="263.0" width="1" height="4" fill="#363636"/><rect x="1227.0" y="263.0" width="1" height="4" fill="#363636"/><rect x="1229.0" y="263.0" width="1" height="4" fill="#363636"/><rect x="1231.0" y="263.0" width="1" height="4" fill="#363636"/><rect x="1233.0" y="263.0" width="1" height="4" fill="#363636"/><rect x="1235.0" y="263.0" width="1" height="4" fill="#363636"/><rect x="1237.0" y="263.0" width="1" height="4" fill="#363636"/><rect x="1239.0" y="263.0" width="1" height="4" fill="#363636"/>
<path d="M1073.5,616 V273.5 Q1073.5,269.5 1077.5,269.5 H1254 V640 H1113 V616 Z" fill="#3a3a3a"/>
<path d="M1074.5,283.4 V273.6 Q1074.5,270.5 1077.6,270.5 H1254 V283.4 Z" fill="#454545"/>
<path d="M1100,275 L1102.8,277.8 L1100,280.6 Z M1104,275 L1106.8,277.8 L1104,280.6 Z" fill="#e0e0e0"/>
<rect x="1074.5" y="284" width="38" height="331.2" fill="#535353"/>
<rect x="1084.0" y="287.0" width="1" height="4" fill="#363636"/><rect x="1086.0" y="287.0" width="1" height="4" fill="#363636"/><rect x="1088.0" y="287.0" width="1" height="4" fill="#363636"/><rect x="1090.0" y="287.0" width="1" height="4" fill="#363636"/><rect x="1092.0" y="287.0" width="1" height="4" fill="#363636"/><rect x="1094.0" y="287.0" width="1" height="4" fill="#363636"/><rect x="1096.0" y="287.0" width="1" height="4" fill="#363636"/><rect x="1098.0" y="287.0" width="1" height="4" fill="#363636"/><rect x="1100.0" y="287.0" width="1" height="4" fill="#363636"/><rect x="1102.0" y="287.0" width="1" height="4" fill="#363636"/>
<path d="M1089.2,301.3 L1101.6,307.8 L1089.2,314.2 Z" fill="#d2d2d2"/>
<circle cx="1094.6" cy="330.6" r="3.7" fill="#d2d2d2"/><circle cx="1090.5" cy="335.8" r="3.7" fill="#d2d2d2"/><circle cx="1098.7" cy="335.8" r="3.7" fill="#d2d2d2"/><path d="M1093.4,333 h2.4 L1096.2,340.6 L1098,342 H1100 V343.2 H1089.2 V342 H1091.2 L1093,340.6 Z" fill="#d2d2d2"/>
<path d="M1094.6,355.2 L1103.2,360.4 L1094.6,365.6 L1086,360.4 Z" fill="#d2d2d2"/><path d="M1087.6,364.6 L1094.6,368.8 L1101.6,364.6 L1103.2,365.8 L1094.6,371.6 L1086,365.8 Z" fill="#d2d2d2"/>
<path d="M1090,393.4 H1099.4 V401 H1090 Z" fill="#d2d2d2"/><path d="M1092.4,392 L1091.2,384.4 Q1090.2,381.4 1092.6,380.4 Q1094,382.6 1093.8,385 L1094.2,392 Z M1095.4,392 L1096.2,386 L1097.4,386 L1097,392 Z M1088.2,384.6 Q1087.4,388 1089.6,390 L1090.8,392 L1089.6,386 Z M1098,392 L1099.4,387.4 Q1099.6,384.6 1102.6,385 Q1103.2,388 1100.8,389.4 L1099.6,392 Z" fill="#d2d2d2"/>
<rect x="1074.5" y="407.8" width="38" height="1" fill="#3c3c3c"/><rect x="1084.0" y="412.0" width="1" height="4" fill="#363636"/><rect x="1086.0" y="412.0" width="1" height="4" fill="#363636"/><rect x="1088.0" y="412.0" width="1" height="4" fill="#363636"/><rect x="1090.0" y="412.0" width="1" height="4" fill="#363636"/><rect x="1092.0" y="412.0" width="1" height="4" fill="#363636"/><rect x="1094.0" y="412.0" width="1" height="4" fill="#363636"/><rect x="1096.0" y="412.0" width="1" height="4" fill="#363636"/><rect x="1098.0" y="412.0" width="1" height="4" fill="#363636"/><rect x="1100.0" y="412.0" width="1" height="4" fill="#363636"/><rect x="1102.0" y="412.0" width="1" height="4" fill="#363636"/>
<defs><linearGradient id="rg" x1="0" x2="1"><stop offset="0" stop-color="#2a2a2a"/><stop offset="1" stop-color="#f0f0f0"/></linearGradient></defs><rect x="1086.6" y="426.2" width="15.8" height="11.6" fill="url(#rg)" stroke="#d2d2d2" stroke-width="1.1"/>
<rect x="1074.5" y="448.6" width="38" height="1" fill="#3c3c3c"/><rect x="1084.0" y="453.0" width="1" height="4" fill="#363636"/><rect x="1086.0" y="453.0" width="1" height="4" fill="#363636"/><rect x="1088.0" y="453.0" width="1" height="4" fill="#363636"/><rect x="1090.0" y="453.0" width="1" height="4" fill="#363636"/><rect x="1092.0" y="453.0" width="1" height="4" fill="#363636"/><rect x="1094.0" y="453.0" width="1" height="4" fill="#363636"/><rect x="1096.0" y="453.0" width="1" height="4" fill="#363636"/><rect x="1098.0" y="453.0" width="1" height="4" fill="#363636"/><rect x="1100.0" y="453.0" width="1" height="4" fill="#363636"/><rect x="1102.0" y="453.0" width="1" height="4" fill="#363636"/>
<rect x="1086.4" y="465.6" width="9.4" height="9.4" fill="#d2d2d2"/><rect x="1092.6" y="471.4" width="9.6" height="9.4" fill="#d2d2d2"/><rect x="1092.2" y="471" width="4" height="4.4" fill="#535353" stroke="#d2d2d2" stroke-width="0.9"/>
<rect x="1089.4" y="494.2" width="13" height="12.4" fill="none" stroke="#d2d2d2" stroke-width="1.2"/><rect x="1086.4" y="501.8" width="5.8" height="5.6" fill="#535353" stroke="#d2d2d2" stroke-width="1.1"/><rect x="1088.6" y="504" width="5" height="5" fill="#535353" stroke="#d2d2d2" stroke-width="1"/>
<path d="M1092.4,526.2 H1089.6 Q1086.2,526.2 1086.2,529.2 Q1086.2,532.2 1089.6,532.2 H1093 Q1096,532.2 1096.2,529.6 M1096.8,532.2 H1099.6 Q1103,532.2 1103,529.2 Q1103,526.2 1099.6,526.2 H1096.2 Q1093.2,526.2 1093,528.8" fill="none" stroke="#d2d2d2" stroke-width="1.9"/>
<path d="M1093.2,551.4 H1086.8 V565 H1100.4 V558.6" fill="none" stroke="#d2d2d2" stroke-width="1.7"/><path d="M1092.6,559.2 L1102.2,549.8 M1096.4,549.6 H1102.6 V555.8" fill="none" stroke="#d2d2d2" stroke-width="1.7"/>
<rect x="1074.5" y="574" width="38" height="1" fill="#3c3c3c"/><rect x="1084.0" y="578.0" width="1" height="4" fill="#363636"/><rect x="1086.0" y="578.0" width="1" height="4" fill="#363636"/><rect x="1088.0" y="578.0" width="1" height="4" fill="#363636"/><rect x="1090.0" y="578.0" width="1" height="4" fill="#363636"/><rect x="1092.0" y="578.0" width="1" height="4" fill="#363636"/><rect x="1094.0" y="578.0" width="1" height="4" fill="#363636"/><rect x="1096.0" y="578.0" width="1" height="4" fill="#363636"/><rect x="1098.0" y="578.0" width="1" height="4" fill="#363636"/><rect x="1100.0" y="578.0" width="1" height="4" fill="#363636"/><rect x="1102.0" y="578.0" width="1" height="4" fill="#363636"/>
<path d="M1087.6,605.4 L1087.6,591.0 A14.4,14.4 0 0 1 1091.3,591.5 Z" fill="#101010"/><path d="M1087.6,605.4 L1091.3,591.5 A14.4,14.4 0 0 1 1094.8,592.9 Z" fill="#3a3a3a"/><path d="M1087.6,605.4 L1094.8,592.9 A14.4,14.4 0 0 1 1097.8,595.2 Z" fill="#686868"/><path d="M1087.6,605.4 L1097.8,595.2 A14.4,14.4 0 0 1 1100.1,598.2 Z" fill="#989898"/><path d="M1087.6,605.4 L1100.1,598.2 A14.4,14.4 0 0 1 1101.5,601.7 Z" fill="#c6c6c6"/><path d="M1087.6,605.4 L1101.5,601.7 A14.4,14.4 0 0 1 1102.0,605.4 Z" fill="#f2f2f2"/><path d="M1087.6,605.4 V591.0 A14.4,14.4 0 0 1 1102.0,605.4 Z" fill="none" stroke="#dcdcdc" stroke-width="1.1"/>
<rect x="1115" y="283.6" width="139" height="356.4" fill="#535353"/>
<rect x="1115" y="283.6" width="139" height="27" fill="#434343"/><rect x="1180.5" y="283.6" width="67.2" height="27" fill="#535353"/><rect x="1180" y="283.6" width="1" height="27" fill="#3c3c3c"/><rect x="1247.7" y="283.6" width="1" height="27" fill="#3c3c3c"/>
<text x="1124.3" y="300.4" font-size="10" font-weight="bold" letter-spacing="-0.31" fill="#a6a6a6">Paragraph</text><text x="1190.0" y="300.4" font-size="10" font-weight="bold" letter-spacing="-0.09" fill="#f2f2f2">OpenType</text>
<rect x="1161.5" y="317.5" width="100" height="20" rx="3" fill="#4a4a4a" stroke="#626262" stroke-width="1"/><text x="1126.9" y="331.8" font-size="10" letter-spacing="-0.07" fill="#c4c4c4">Figure:</text><text x="1168.0" y="331.8" font-size="10" letter-spacing="-0.04" fill="#f2f2f2">Default Figure</text>
<rect x="1161.5" y="343.8" width="100" height="20" rx="3" fill="#4a4a4a" stroke="#626262" stroke-width="1"/><text x="1120.3" y="358.0" font-size="10" letter-spacing="-0.13" fill="#c4c4c4">Position:</text><text x="1168.0" y="358.0" font-size="10" letter-spacing="-0.08" fill="#f2f2f2">Default Position</text>
<rect x="1121" y="370" width="24" height="24" rx="3" fill="#2d2d2d"/><text x="1132.8" y="389.2" font-family="'Liberation Serif',serif" font-size="19.5" text-anchor="middle" fill="#ffffff" letter-spacing="-0.6">fi</text><text x="1159" y="389" font-family="'Liberation Serif',serif" font-size="20" font-style="italic" font-weight="bold" text-anchor="middle" fill="#6c6c6c" stroke="#6c6c6c" stroke-width="0.9">O</text><text x="1184.8" y="389" font-family="'Liberation Serif',serif" font-size="18" font-weight="bold" text-anchor="middle" fill="#737373" letter-spacing="-0.5">st</text><text x="1210.6" y="389" font-family="'Liberation Serif',serif" font-size="19" font-style="italic" font-weight="bold" text-anchor="middle" fill="#737373">A</text><text x="1237" y="389.2" font-family="'Liberation Serif',serif" font-size="16" font-weight="bold" text-anchor="middle" fill="#d0d0d0" letter-spacing="-0.4">aa</text><path d="M1230,377.6 H1243.4" stroke="#d0d0d0" stroke-width="1.1"/><path d="M1241.4,375.4 L1244.8,377.6 L1241.4,379.8 Z" fill="#d0d0d0"/>
<rect x="1115" y="400.4" width="139" height="2.6" fill="#3a3a3a"/>
<rect x="1115" y="403" width="139" height="26.6" fill="#434343"/><rect x="1115" y="403" width="86.3" height="27" fill="#535353"/><rect x="1201.3" y="403" width="1" height="26.6" fill="#3c3c3c"/>
<path d="M1120.2,414.0 l2.3,-2.6 l2.3,2.6 M1120.2,416.8 l2.3,2.6 l2.3,-2.6" fill="none" stroke="#c0c0c0" stroke-width="1.1"/><text x="1130.8" y="419.2" font-size="10" font-weight="bold" letter-spacing="-0.40" fill="#f2f2f2">Transparency</text>
<rect x="1120.8" y="436.6" width="92" height="19.8" rx="3" fill="#4a4a4a" stroke="#626262" stroke-width="1"/><text x="1126.9" y="450.4" font-size="10" letter-spacing="-0.09" fill="#f2f2f2">Normal</text><path d="M1199.8,444.4 L1203.5,448 L1207.2,444.4" fill="none" stroke="#e8e8e8" stroke-width="1.4"/><text x="1218.4" y="450.4" font-size="10" letter-spacing="0.12" fill="#b4b4b4">Opacity:</text>
<rect x="1120.8" y="462.6" width="134" height="1.2" fill="#474747"/><rect x="1121" y="471" width="140" height="55.4" rx="3" fill="#505050" stroke="#5e5e5e" stroke-width="1"/>
<rect x="1115" y="533.8" width="139" height="2.8" fill="#3a3a3a"/>
<rect x="1115" y="536.6" width="139" height="26.8" fill="#434343"/><rect x="1115" y="536.6" width="56.4" height="27" fill="#535353"/><rect x="1171.4" y="536.6" width="1" height="26.8" fill="#3c3c3c"/>
<path d="M1120.2,547.6 l2.3,-2.6 l2.3,2.6 M1120.2,550.4 l2.3,2.6 l2.3,-2.6" fill="none" stroke="#c0c0c0" stroke-width="1.1"/><text x="1130.0" y="553.0" font-size="10" font-weight="bold" letter-spacing="0.08" fill="#f2f2f2">Stroke</text><text x="1180.3" y="553.0" font-size="10" font-weight="bold" letter-spacing="0.06" fill="#a6a6a6">Paragraph Styles</text>
<text x="1142.5" y="584.6" font-size="10" letter-spacing="0.01" fill="#dcdcdc">Weight:</text><rect x="1180.5" y="570.6" width="68.6" height="19.6" fill="#464646" stroke="#606060" stroke-width="1"/><rect x="1181" y="571.1" width="17.4" height="18.6" fill="#4c4c4c"/><path d="M1198.4,570.6 V590.2" stroke="#606060" stroke-width="1"/><path d="M1186,577 L1189.7,573.4 L1193.4,577 M1186,583.6 L1189.7,587.2 L1193.4,583.6" fill="none" stroke="#e8e8e8" stroke-width="1.3"/><rect x="1250.4" y="570.6" width="10" height="19.6" fill="#4c4c4c" stroke="#606060" stroke-width="1"/>
<text x="1156.8" y="611.0" font-size="10" letter-spacing="-0.51" fill="#858585">Cap:</text><rect x="1180.5" y="596.4" width="67.3" height="21.2" fill="none" stroke="#606060" stroke-width="1"/><path d="M1202.5,596.4 V617.6 M1225.6,596.4 V617.6" stroke="#606060" stroke-width="1"/><path d="M1189,601.4 H1197 V605.8 H1191.4 V609.4 H1197 V613.8 H1189 Z" fill="#7e7e7e"/><circle cx="1188.4" cy="607.6" r="1.4" fill="none" stroke="#7e7e7e" stroke-width="0.8"/><path d="M1220,601.4 H1214.6 A6.2,6.2 0 0 0 1214.6,613.8 H1220 V609.4 H1214.6 V605.8 H1220 Z" fill="#7e7e7e"/><path d="M1231.6,601.4 H1243.2 V605.8 H1237.6 V609.4 H1243.2 V613.8 H1231.6 Z" fill="#7e7e7e"/>
<text x="1144.3" y="637.4" font-size="10" letter-spacing="-0.25" fill="#858585">Corner:</text><rect x="1180.5" y="623.8" width="67.3" height="21.2" fill="none" stroke="#606060" stroke-width="1"/><path d="M1202.5,623.8 V645 M1225.6,623.8 V645" stroke="#606060" stroke-width="1"/><path d="M1185.6,640 V628.6 H1197 V633 H1193.6 V640 H1190.8 V633.4 H1188.8 V640 Z" fill="#7e7e7e"/><path d="M1208.6,640 V634 Q1208.6,628.6 1214,628.6 H1220 V633 H1216.6 V640 H1213.8 V633.4 H1211.8 V640 Z" fill="#7e7e7e"/><path d="M1231.6,640 V633 L1236,628.6 H1243 V633 H1239.6 V640 H1236.8 V633.4 H1234.8 V640 Z" fill="#7e7e7e"/>
</svg>
</div>
</body></html>
